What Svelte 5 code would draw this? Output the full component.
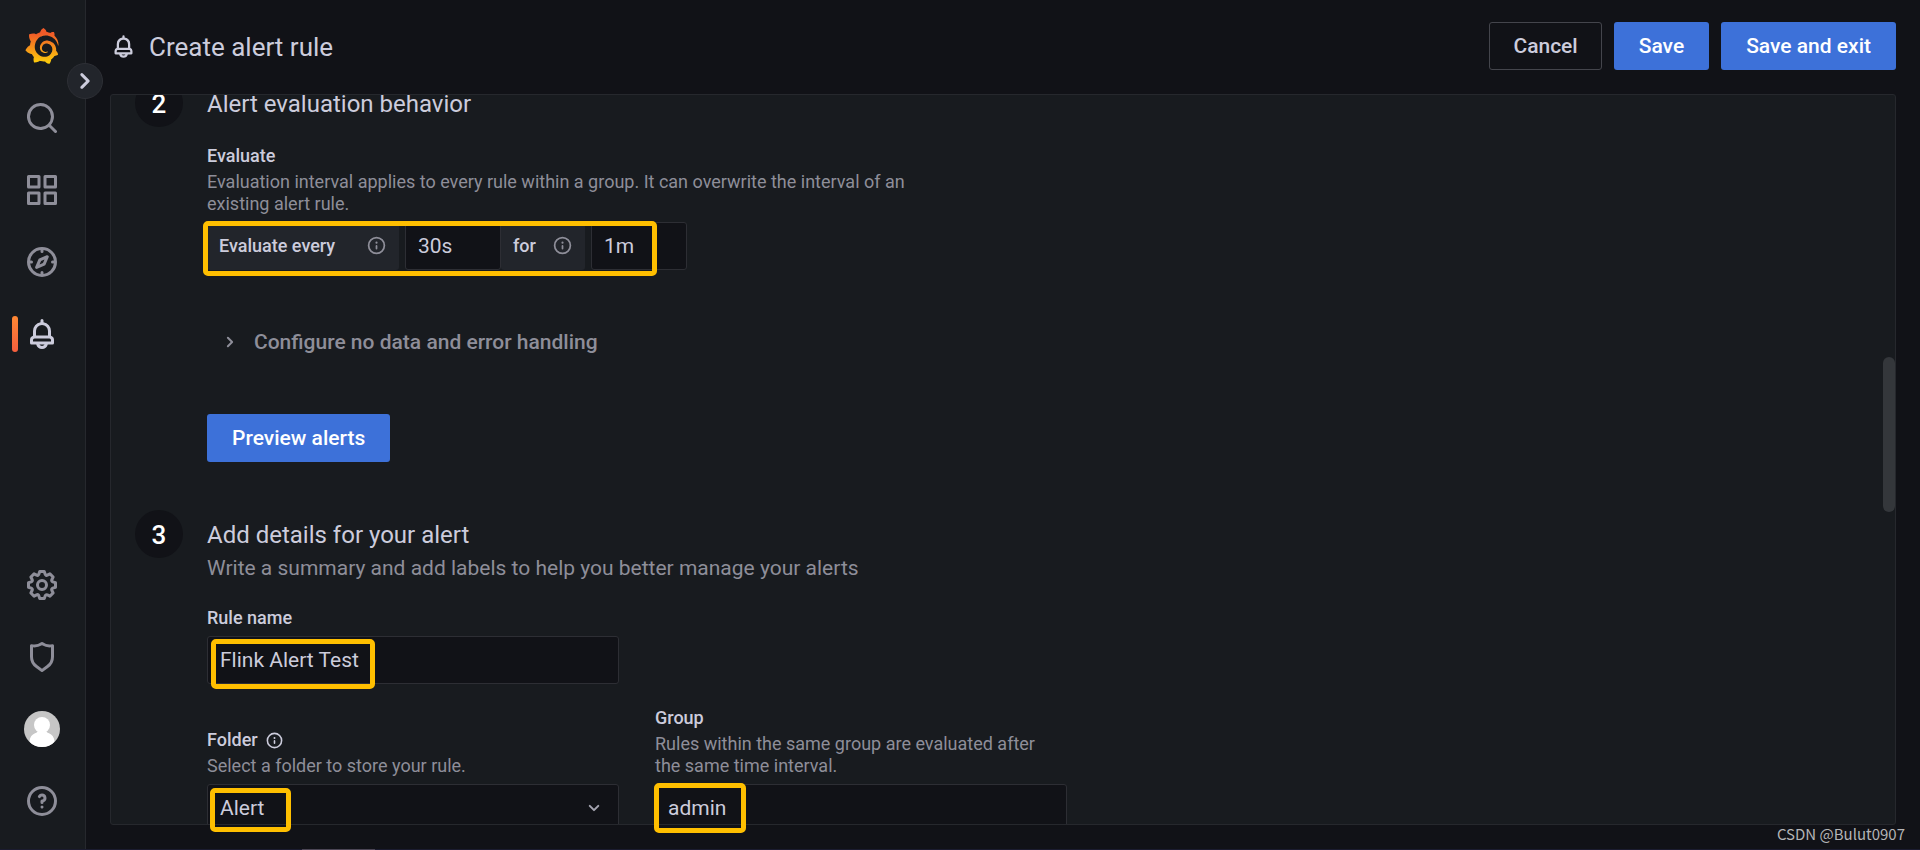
<script lang="ts">
	const icons = {
		search:
			'M21.71,20.29,18,16.61A9,9,0,1,0,16.61,18l3.68,3.68a1,1,0,0,0,1.42,0A1,1,0,0,0,21.71,20.29ZM11,18a7,7,0,1,1,7-7A7,7,0,0,1,11,18Z',
		apps: 'M10,13H3a1,1,0,0,0-1,1v7a1,1,0,0,0,1,1h7a1,1,0,0,0,1-1V14A1,1,0,0,0,10,13ZM9,20H4V15H9ZM21,2H14a1,1,0,0,0-1,1v7a1,1,0,0,0,1,1h7a1,1,0,0,0,1-1V3A1,1,0,0,0,21,2ZM20,9H15V4h5Zm1,4H14a1,1,0,0,0-1,1v7a1,1,0,0,0,1,1h7a1,1,0,0,0,1-1V14A1,1,0,0,0,21,13Zm-1,7H15V15h5ZM10,2H3A1,1,0,0,0,2,3v7a1,1,0,0,0,1,1h7a1,1,0,0,0,1-1V3A1,1,0,0,0,10,2ZM9,9H4V4H9Z',
		compass:
			'M12,2A10,10,0,1,0,22,12,10,10,0,0,0,12,2Zm1,17.93V19a1,1,0,0,0-2,0v.93A8,8,0,0,1,4.07,13H5a1,1,0,0,0,0-2H4.07A8,8,0,0,1,11,4.07V5a1,1,0,0,0,2,0V4.07A8,8,0,0,1,19.93,11H19a1,1,0,0,0,0,2h.93A8,8,0,0,1,13,19.93ZM15.14,7.55l-5,2.12a1,1,0,0,0-.52.52l-2.12,5a1,1,0,0,0,.21,1.1,1,1,0,0,0,.7.3.93.93,0,0,0,.4-.09l5-2.12a1,1,0,0,0,.52-.52l2.12-5a1,1,0,0,0-1.31-1.31Zm-2.49,5.1-2.28,1,1-2.28,2.28-1Z',
		bell: 'M18,13.18V10a6,6,0,0,0-5-5.91V3a1,1,0,0,0-2,0V4.09A6,6,0,0,0,6,10v3.18A3,3,0,0,0,4,16v2a1,1,0,0,0,1,1H8.14a4,4,0,0,0,7.72,0H19a1,1,0,0,0,1-1V16A3,3,0,0,0,18,13.18ZM8,10a4,4,0,0,1,8,0v3H8Zm4,10a2,2,0,0,1-1.72-1h3.44A2,2,0,0,1,12,20Zm6-3H6V16a1,1,0,0,1,1-1H17a1,1,0,0,1,1,1Z',
		cog: 'M21.32,9.55l-1.89-.63.89-1.78A1,1,0,0,0,20.13,6L18,3.87a1,1,0,0,0-1.15-.19l-1.78.89-.63-1.89A1,1,0,0,0,13.5,2h-3a1,1,0,0,0-.95.68L8.92,4.57,7.14,3.68A1,1,0,0,0,6,3.87L3.87,6a1,1,0,0,0-.19,1.15l.89,1.78-1.89.63A1,1,0,0,0,2,10.5v3a1,1,0,0,0,.68.95l1.89.63-.89,1.78A1,1,0,0,0,3.87,18L6,20.13a1,1,0,0,0,1.15.19l1.78-.89.63,1.89a1,1,0,0,0,.95.68h3a1,1,0,0,0,.95-.68l.63-1.89,1.78.89A1,1,0,0,0,18,20.13L20.13,18a1,1,0,0,0,.19-1.15l-.89-1.78,1.89-.63A1,1,0,0,0,22,13.5v-3A1,1,0,0,0,21.32,9.55ZM20,12.78l-1.2.4A2,2,0,0,0,17.64,16l.57,1.14-1.1,1.1L16,17.64a2,2,0,0,0-2.79,1.16l-.4,1.2H11.22l-.4-1.2A2,2,0,0,0,8,17.64l-1.14.57-1.1-1.1L6.36,16A2,2,0,0,0,5.2,13.18L4,12.78V11.22l1.2-.4A2,2,0,0,0,6.36,8L5.79,6.89l1.1-1.1L8,6.36A2,2,0,0,0,10.82,5.2l.4-1.2h1.56l.4,1.2A2,2,0,0,0,16,6.36l1.14-.57,1.1,1.1L17.64,8a2,2,0,0,0,1.16,2.79l1.2.4ZM12,8a4,4,0,1,0,4,4A4,4,0,0,0,12,8Zm0,6a2,2,0,1,1,2-2A2,2,0,0,1,12,14Z',
		shield:
			'M19.63,3.65a1,1,0,0,0-.84-.2,8,8,0,0,1-6.22-1.27,1,1,0,0,0-1.14,0A8,8,0,0,1,5.21,3.45a1,1,0,0,0-.84.2A1,1,0,0,0,4,4.43v7.45a9,9,0,0,0,3.77,7.33l3.65,2.6a1,1,0,0,0,1.16,0l3.65-2.6A9,9,0,0,0,20,11.88V4.43A1,1,0,0,0,19.63,3.65ZM18,11.88a7,7,0,0,1-2.93,5.7L12,19.77,8.93,17.58A7,7,0,0,1,6,11.88V5.58a10,10,0,0,0,6-1.39,10,10,0,0,0,6,1.39Z',
		question:
			'M11.29,15.29a1.58,1.58,0,0,0-.12.15.76.76,0,0,0-.09.18.64.64,0,0,0-.06.18,1.36,1.36,0,0,0,0,.2.84.84,0,0,0,.08.38.9.9,0,0,0,.54.54.94.94,0,0,0,.76,0,.9.9,0,0,0,.54-.54A1,1,0,0,0,13,16a1,1,0,0,0-.29-.71A1,1,0,0,0,11.29,15.29ZM12,2A10,10,0,1,0,22,12,10,10,0,0,0,12,2Zm0,18a8,8,0,1,1,8-8A8,8,0,0,1,12,20ZM12,7A3,3,0,0,0,9.4,8.5a1,1,0,1,0,1.73,1A1,1,0,0,1,12,9a1,1,0,0,1,0,2,1,1,0,0,0-1,1v1a1,1,0,0,0,2,0v-.18A3,3,0,0,0,12,7Z',
		info: 'M12,2A10,10,0,1,0,22,12,10,10,0,0,0,12,2Zm0,18a8,8,0,1,1,8-8A8,8,0,0,1,12,20Zm0-8.5a1,1,0,0,0-1,1v3a1,1,0,0,0,2,0v-3A1,1,0,0,0,12,11.5Zm0-4a1.25,1.25,0,1,0,1.25,1.25A1.25,1.25,0,0,0,12,7.5Z',
		angleRight:
			'M14.83,11.29,10.59,7.05a1,1,0,0,0-1.42,0,1,1,0,0,0,0,1.41L12.71,12,9.17,15.54a1,1,0,0,0,0,1.41,1,1,0,0,0,.71.29,1,1,0,0,0,.71-.29l4.24-4.24A1,1,0,0,0,14.83,11.29Z',
		angleDown:
			'M17,9.17a1,1,0,0,0-1.41,0L12,12.71,8.46,9.17a1,1,0,0,0-1.41,0,1,1,0,0,0,0,1.42l4.24,4.24a1,1,0,0,0,1.42,0L17,10.59A1,1,0,0,0,17,9.17Z'
	};

	const mainNav = [
		{ label: 'Search', icon: icons.search, active: false },
		{ label: 'Dashboards', icon: icons.apps, active: false },
		{ label: 'Explore', icon: icons.compass, active: false },
		{ label: 'Alerting', icon: icons.bell, active: true }
	];

	let every = $state('30s');
	let duration = $state('1m');
	let ruleName = $state('Flink Alert Test');
	let folder = $state('Alert');
	let group = $state('admin');
</script>

{#snippet icon(path: string, cls: string)}
	<svg class="icon {cls}" viewBox="0 0 24 24" aria-hidden="true"><path d={path} /></svg>
{/snippet}

<div class="app">
	<div class="shell">
		<nav class="sidebar" aria-label="Main">
			<a class="logo" href="#home" aria-label="Home">
				<svg viewBox="8 0 335 365" aria-hidden="true">
					<defs>
						<linearGradient id="flame" x1="0" y1="1" x2="0" y2="0">
							<stop offset="0" stop-color="#fcd00a" />
							<stop offset="0.85" stop-color="#f05a28" />
						</linearGradient>
					</defs>
					<path
						fill="url(#flame)"
						d="M342,161.2c-0.6-6.1-1.6-13.1-3.6-20.9c-2-7.7-5-16.2-9.4-25c-4.4-8.8-10.1-17.9-17.5-26.8c-2.9-3.5-6.1-6.9-9.5-10.2c5.1-20.3-6.2-37.9-6.2-37.9c-19.5-1.2-31.9,6.1-36.5,9.4c-0.8-0.3-1.5-0.7-2.3-1c-3.3-1.3-6.7-2.6-10.3-3.7c-3.5-1.1-7.1-2.1-10.8-3c-3.7-0.9-7.4-1.6-11.2-2.2c-0.7-0.1-1.3-0.2-2-0.3c-8.5-27.2-32.9-38.6-32.9-38.6c-27.3,17.3-32.4,41.5-32.4,41.5s-0.1,0.5-0.3,1.4c-1.5,0.4-3,0.9-4.5,1.3c-2.1,0.6-4.2,1.4-6.2,2.2c-2.1,0.8-4.1,1.6-6.2,2.5c-4.1,1.8-8.2,3.8-12.2,6c-3.9,2.2-7.7,4.6-11.4,7.1c-0.5-0.2-1-0.4-1-0.4c-37.8-14.4-71.3,2.9-71.3,2.9c-3.1,40.2,15.1,65.5,18.7,70.1c-0.9,2.5-1.7,5-2.5,7.5c-2.8,9.1-4.9,18.4-6.2,28.1c-0.2,1.4-0.4,2.8-0.5,4.2C18.8,192.7,8.5,228,8.5,228c29.1,33.5,63.1,35.6,63.1,35.6c0,0,0.1-0.1,0.1-0.1c4.3,7.7,9.3,15,14.9,21.9c2.4,2.9,4.8,5.6,7.4,8.3c-10.6,30.4,1.5,55.6,1.5,55.6c32.4,1.2,53.7-14.2,58.2-17.7c3.2,1.1,6.5,2.1,9.8,2.9c10,2.6,20.2,4.1,30.4,4.5c2.5,0.1,5.1,0.2,7.6,0.1l1.2,0l0.8,0l1.6,0l1.6-0.1l0,0.1c15.3,21.8,42.1,24.9,42.1,24.9c19.1-20.1,20.2-40.1,20.2-44.4l0,0c0,0,0-0.1,0-0.3c0-0.4,0-0.6,0-0.6l0,0c0-0.3,0-0.6,0-0.9c4-2.8,7.8-5.8,11.4-9.1c7.6-6.9,14.3-14.8,19.9-23.3c0.5-0.8,1-1.6,1.5-2.4c21.6,1.2,36.9-13.4,36.9-13.4c-3.6-22.5-16.4-33.5-19.1-35.6l0,0c0,0-0.1-0.1-0.3-0.2c-0.2-0.1-0.2-0.2-0.2-0.2c0,0,0,0,0,0c-0.1-0.1-0.3-0.2-0.5-0.3c0.1-1.4,0.2-2.7,0.3-4.1c0.2-2.4,0.2-4.9,0.2-7.3l0-1.8l0-0.9l0-0.5c0-0.6,0-0.4,0-0.6l-0.1-1.5l-0.1-2c0-0.7-0.1-1.3-0.2-1.9c-0.1-0.6-0.1-1.3-0.2-1.9l-0.2-1.9l-0.3-1.9c-0.4-2.5-0.8-4.9-1.4-7.4c-2.3-9.7-6.1-18.9-11-27.2c-5-8.3-11.2-15.6-18.3-21.8c-7-6.2-14.9-11.2-23.1-14.9c-8.3-3.7-16.9-6.1-25.5-7.2c-4.3-0.6-8.6-0.8-12.9-0.7l-1.6,0l-0.4,0c-0.1,0-0.6,0-0.5,0l-0.7,0l-1.6,0.1c-0.6,0-1.2,0.1-1.7,0.1c-2.2,0.2-4.4,0.5-6.5,0.9c-8.6,1.6-16.7,4.7-23.8,9c-7.1,4.3-13.3,9.6-18.3,15.6c-5,6-8.9,12.7-11.6,19.6c-2.7,6.9-4.2,14.1-4.6,21c-0.1,1.7-0.1,3.5-0.1,5.2c0,0.4,0,0.9,0,1.3l0.1,1.4c0.1,0.8,0.1,1.7,0.2,2.5c0.3,3.5,1,6.9,1.9,10.1c1.9,6.5,4.9,12.4,8.6,17.4c3.7,5,8.2,9.1,12.9,12.4c4.7,3.2,9.8,5.5,14.8,7c5,1.5,10,2.1,14.7,2.1c0.6,0,1.2,0,1.7,0c0.3,0,0.6,0,0.9,0c0.3,0,0.6,0,0.9-0.1c0.5,0,1-0.1,1.5-0.1c0.1,0,0.3,0,0.4-0.1l0.5-0.1c0.3,0,0.6-0.1,0.9-0.1c0.6-0.1,1.1-0.2,1.7-0.3c0.6-0.1,1.1-0.2,1.6-0.4c1.1-0.2,2.1-0.6,3.1-0.9c2-0.7,4-1.5,5.7-2.4c1.8-0.9,3.4-2,5-3c0.4-0.3,0.9-0.6,1.3-1c1.6-1.3,1.9-3.7,0.6-5.3c-1.1-1.4-3.1-1.8-4.7-0.9c-0.4,0.2-0.8,0.4-1.2,0.6c-1.4,0.7-2.8,1.3-4.3,1.8c-1.5,0.5-3.1,0.9-4.7,1.2c-0.8,0.1-1.6,0.2-2.5,0.3c-0.4,0-0.8,0.1-1.3,0.1c-0.4,0-0.9,0-1.2,0c-0.4,0-0.8,0-1.2,0c-0.5,0-1,0-1.5-0.1c0,0-0.3,0-0.1,0l-0.2,0l-0.3,0c-0.2,0-0.5,0-0.7-0.1c-0.5-0.1-0.9-0.1-1.4-0.2c-3.7-0.5-7.4-1.6-10.9-3.2c-3.6-1.6-7-3.8-10.1-6.6c-3.1-2.8-5.8-6.1-7.9-9.9c-2.1-3.8-3.6-8-4.3-12.4c-0.3-2.2-0.5-4.5-0.4-6.7c0-0.6,0.1-1.2,0.1-1.8c0,0.2,0-0.1,0-0.1l0-0.2l0-0.5c0-0.3,0.1-0.6,0.1-0.9c0.1-1.2,0.3-2.4,0.5-3.6c1.7-9.6,6.5-19,13.9-26.1c1.9-1.8,3.9-3.4,6-4.9c2.1-1.5,4.4-2.8,6.8-3.9c2.4-1.1,4.8-2,7.4-2.7c2.5-0.7,5.1-1.1,7.8-1.4c1.3-0.1,2.6-0.2,4-0.2c0.4,0,0.6,0,0.9,0l1.1,0l0.7,0c0.3,0,0,0,0.1,0l0.3,0l1.1,0.1c2.9,0.2,5.7,0.6,8.5,1.3c5.6,1.2,11.1,3.3,16.2,6.1c10.2,5.7,18.9,14.5,24.2,25.1c2.7,5.3,4.6,11,5.5,16.9c0.2,1.5,0.4,3,0.5,4.5l0.1,1.1l0.1,1.1c0,0.4,0,0.8,0,1.1c0,0.4,0,0.8,0,1.1l0,1l0,1.1c0,0.7-0.1,1.9-0.1,2.6c-0.1,1.6-0.3,3.3-0.5,4.9c-0.2,1.6-0.5,3.2-0.8,4.8c-0.3,1.6-0.7,3.2-1.1,4.7c-0.8,3.1-1.8,6.2-3,9.3c-2.4,6-5.6,11.8-9.4,17.1c-7.7,10.6-18.2,19.2-30.2,24.7c-6,2.7-12.3,4.7-18.8,5.7c-3.2,0.6-6.5,0.9-9.8,1l-0.6,0l-0.5,0l-1.1,0l-1.6,0l-0.8,0c0.4,0-0.1,0-0.1,0l-0.3,0c-1.8,0-3.5-0.1-5.3-0.3c-7-0.5-13.9-1.8-20.7-3.7c-6.7-1.9-13.2-4.6-19.4-7.8c-12.3-6.6-23.4-15.6-32-26.5c-4.3-5.4-8.1-11.3-11.2-17.4c-3.1-6.1-5.6-12.6-7.4-19.1c-1.8-6.6-2.9-13.3-3.4-20.1l-0.1-1.3l0-0.3l0-0.3l0-0.6l0-1.1l0-0.3l0-0.4l0-0.8l0-1.6l0-0.3c0,0,0,0.1,0-0.1l0-0.6c0-0.8,0-1.7,0-2.5c0.1-3.3,0.4-6.8,0.8-10.2c0.4-3.4,1-6.9,1.7-10.3c0.7-3.4,1.5-6.8,2.5-10.2c1.9-6.7,4.3-13.2,7.1-19.3c5.7-12.2,13.1-23.1,22-31.8c2.2-2.2,4.5-4.2,6.9-6.2c2.4-1.9,4.9-3.7,7.5-5.4c2.5-1.7,5.2-3.2,7.9-4.6c1.3-0.7,2.7-1.4,4.1-2c0.7-0.3,1.4-0.6,2.1-0.9c0.7-0.3,1.4-0.6,2.1-0.9c2.8-1.2,5.7-2.2,8.7-3.1c0.7-0.2,1.5-0.4,2.2-0.7c0.7-0.2,1.5-0.4,2.2-0.6c1.5-0.4,3-0.8,4.5-1.1c0.7-0.2,1.5-0.3,2.3-0.5c0.8-0.2,1.5-0.3,2.3-0.5c0.8-0.1,1.5-0.3,2.3-0.4l1.1-0.2l1.2-0.2c0.8-0.1,1.5-0.2,2.3-0.3c0.9-0.1,1.7-0.2,2.6-0.3c0.7-0.1,1.9-0.2,2.6-0.3c0.5-0.1,1.1-0.1,1.6-0.2l1.1-0.1l0.5-0.1l0.6,0c0.9-0.1,1.7-0.1,2.6-0.2l1.3-0.1c0,0,0.5,0,0.1,0l0.3,0l0.6,0c0.7,0,1.5-0.1,2.2-0.1c2.9-0.1,5.9-0.1,8.8,0c5.8,0.2,11.5,0.9,17,1.9c11.1,2.1,21.5,5.6,31,10.3c9.5,4.6,17.9,10.3,25.3,16.5c0.5,0.4,0.9,0.8,1.4,1.2c0.4,0.4,0.9,0.8,1.3,1.2c0.9,0.8,1.7,1.6,2.6,2.4c0.9,0.8,1.7,1.6,2.5,2.4c0.8,0.8,1.6,1.6,2.4,2.5c3.1,3.3,6,6.6,8.6,10c5.2,6.7,9.4,13.5,12.7,19.9c0.2,0.4,0.4,0.8,0.6,1.2c0.2,0.4,0.4,0.8,0.6,1.2c0.4,0.8,0.8,1.6,1.1,2.4c0.4,0.8,0.7,1.5,1.1,2.3c0.3,0.8,0.7,1.5,1,2.3c1.2,3,2.4,5.9,3.3,8.6c1.5,4.4,2.6,8.3,3.5,11.7c0.3,1.4,1.6,2.3,3,2.1c1.5-0.1,2.6-1.3,2.6-2.8C342.6,170.4,342.5,166.1,342,161.2z"
					/>
				</svg>
			</a>
			{#each mainNav as item}
				<a class="nav-item" class:active={item.active} href="#nav" aria-label={item.label}>
					{@render icon(item.icon, 'icon-nav')}
				</a>
			{/each}
			<div class="nav-spacer"></div>
			<a class="nav-item" href="#settings" aria-label="Configuration">
				{@render icon(icons.cog, 'icon-nav')}
			</a>
			<a class="nav-item" href="#admin" aria-label="Server admin">
				{@render icon(icons.shield, 'icon-nav')}
			</a>
			<a class="nav-item" href="#profile" aria-label="Profile">
				<svg class="avatar" viewBox="0 0 36 36" aria-hidden="true">
					<rect width="36" height="36" fill="#c6c6c6" />
					<ellipse cx="18" cy="14" rx="8" ry="8" fill="#fff" />
					<path
						fill="#fff"
						d="M14 19h8c0 2 1 2.500 3 3.200 3 1.200 5 3.800 5.500 7.800L28 36H8l-2.500-6c.5-4 2.500-6.600 5.500-7.800 2-.7 3-1.200 3-3.200z"
					/>
				</svg>
			</a>
			<a class="nav-item" href="#help" aria-label="Help">
				{@render icon(icons.question, 'icon-nav')}
			</a>
			<button class="nav-toggle" type="button" aria-label="Expand menu">
				{@render icon(icons.angleRight, 'icon-toggle')}
			</button>
		</nav>

		<main class="page">
			<header class="toolbar">
				{@render icon(icons.bell, 'icon-title')}
				<h1>Create alert rule</h1>
				<div class="toolbar-actions">
					<button class="btn btn-outline" type="button">Cancel</button>
					<button class="btn" type="button">Save</button>
					<button class="btn" type="button">Save and exit</button>
				</div>
			</header>

			<div class="panel-wrap">
				<div class="panel">
					<form class="rule-form">
						<section class="step">
							<span class="step-number">2</span>
							<div class="step-body">
								<h2>Alert evaluation behavior</h2>
								<div class="field evaluate">
									<span class="label">Evaluate</span>
									<p class="description">
										Evaluation interval applies to every rule within a group. It can overwrite the
										interval of an existing alert rule.
									</p>
									<div class="inline-fields">
										<label class="inline-label label-every" for="every">
											Evaluate every {@render icon(icons.info, 'icon-info')}
										</label>
										<input id="every" class="control short" type="text" bind:value={every} />
										<label class="inline-label label-for" for="duration">
											for {@render icon(icons.info, 'icon-info')}
										</label>
										<input id="duration" class="control short" type="text" bind:value={duration} />
									</div>
								</div>
								<button class="collapse" type="button">
									{@render icon(icons.angleRight, 'icon-angle')}
									Configure no data and error handling
								</button>
								<button class="btn" type="button">Preview alerts</button>
							</div>
						</section>

						<section class="step">
							<span class="step-number">3</span>
							<div class="step-body">
								<h2>Add details for your alert</h2>
								<p class="summary">Write a summary and add labels to help you better manage your alerts</p>
								<div class="field-row rule-row">
									<div class="field">
										<label class="label" for="rule-name">Rule name</label>
										<input id="rule-name" class="control" type="text" bind:value={ruleName} />
									</div>
								</div>
								<div class="field-row">
									<div class="field">
										<label class="label" for="folder">
											Folder {@render icon(icons.info, 'icon-label')}
										</label>
										<p class="description">Select a folder to store your rule.</p>
										<div class="select-wrap">
											<select id="folder" class="control" bind:value={folder}>
												<option>Alert</option>
											</select>
											{@render icon(icons.angleDown, 'icon-caret')}
										</div>
									</div>
									<div class="field">
										<label class="label" for="group">Group</label>
										<p class="description">
											Rules within the same group are evaluated after the same time interval.
										</p>
										<input id="group" class="control" type="text" bind:value={group} />
									</div>
								</div>
							</div>
						</section>
					</form>
					<div class="scroll-thumb"></div>
				</div>

				<div class="mark mark-evaluate"></div>
				<div class="mark mark-name"></div>
				<div class="mark mark-folder"></div>
				<div class="mark mark-group"></div>
			</div>
		</main>
	</div>
	<div class="bottom-edge"><span></span></div>
	<span class="watermark">CSDN @Bulut0907</span>
</div>

<style>
	:global(body) {
		background: #111217;
	}

	.app {
		position: relative;
		display: flex;
		flex-direction: column;
		height: 100vh;
		overflow: hidden;
		background: #111217;
		color: #ccccdc;
		font-family: Roboto, 'Liberation Sans', sans-serif;
		font-size: 21px;
	}

	.app *,
	.app *::before {
		box-sizing: border-box;
	}

	.shell {
		display: flex;
		flex: 1;
		min-height: 0;
	}

	h1,
	h2,
	p {
		margin: 0;
		font-weight: 400;
	}

	button,
	input,
	select {
		font: inherit;
		color: inherit;
	}

	.icon {
		display: block;
		flex: none;
		fill: currentColor;
	}

	/* Sidebar */
	.sidebar {
		position: relative;
		display: flex;
		flex-direction: column;
		flex: none;
		width: 86px;
		padding: 10px 0 12px;
		background: #181b1f;
		border-right: 1px solid #26282d;
	}

	.logo,
	.nav-item {
		position: relative;
		display: flex;
		align-items: center;
		justify-content: center;
		height: 72px;
		padding-right: 1px;
		color: #8e8e99;
	}

	.logo svg {
		width: 34px;
		height: 36px;
	}

	.nav-item.active {
		color: #ccccdc;
	}

	.nav-item.active::before {
		content: '';
		position: absolute;
		left: 12px;
		width: 6px;
		height: 36px;
		border-radius: 3px;
		background: linear-gradient(#ff8833, #f55f3e);
	}

	.nav-spacer {
		flex: 1;
	}

	.icon-nav,
	.avatar {
		width: 36px;
		height: 36px;
	}

	.avatar {
		border-radius: 50%;
	}

	.nav-toggle {
		position: absolute;
		top: 63px;
		right: -18px;
		z-index: 2;
		display: flex;
		align-items: center;
		justify-content: center;
		width: 36px;
		height: 36px;
		padding: 0;
		border: 1px solid #2d2f35;
		border-radius: 50%;
		background: #22252b;
	}

	.icon-toggle {
		width: 36px;
		height: 36px;
	}

	/* Page */
	.page {
		display: flex;
		flex-direction: column;
		flex: 1;
		min-width: 0;
		padding: 0 24px 24px;
	}

	.toolbar {
		display: flex;
		align-items: center;
		height: 94px;
		padding-bottom: 2px;
	}

	.icon-title {
		width: 27px;
		height: 27px;
	}

	h1 {
		margin-left: 12px;
		padding-top: 2px;
		font-size: 26px;
		line-height: 36px;
	}

	.toolbar-actions {
		display: flex;
		gap: 12px;
		margin-left: auto;
	}

	.btn {
		height: 48px;
		padding: 0 25px;
		border: 0;
		border-radius: 3px;
		background: #3d71d9;
		color: #fff;
		font-weight: 500;
		white-space: nowrap;
	}

	.btn-outline {
		padding: 0 23px;
		border: 1px solid #44454c;
		background: transparent;
		color: #ccccdc;
	}

	.panel-wrap {
		position: relative;
		display: flex;
		flex: 1;
		min-height: 0;
	}

	.panel {
		position: relative;
		flex: 1;
		overflow: hidden;
		border: 1px solid #26282d;
		border-radius: 3px;
		background: #181b1f;
	}

	/* The form sits slightly scrolled under the panel's top edge */
	.rule-form {
		display: flex;
		flex-direction: column;
		gap: 48px;
		margin-top: -16px;
		padding: 0 24px;
	}

	.scroll-thumb {
		position: absolute;
		top: 262px;
		right: 0;
		width: 12px;
		height: 155px;
		border-radius: 6px;
		background: #34373b;
	}

	.step {
		display: flex;
		gap: 24px;
	}

	.step-number {
		flex: none;
		width: 48px;
		height: 48px;
		border-radius: 50%;
		background: #111217;
		color: #fff;
		font-size: 26px;
		font-weight: 500;
		line-height: 50px;
		text-align: center;
	}

	.step-body {
		display: flex;
		flex-direction: column;
		align-items: flex-start;
		flex: 1;
		min-width: 0;
	}

	h2 {
		font-size: 24px;
		line-height: 50px;
	}

	.summary {
		margin-top: -4px;
		color: #8e8e99;
		line-height: 24px;
	}

	.field {
		display: flex;
		flex-direction: column;
		width: 412px;
	}

	.field.evaluate {
		width: auto;
		max-width: 720px;
		margin-top: 15px;
	}

	.label {
		display: flex;
		align-items: center;
		gap: 7px;
		margin-bottom: 3px;
		font-size: 18px;
		font-weight: 500;
		line-height: 24px;
	}

	.description {
		margin-bottom: 7px;
		padding-right: 12px;
		color: #8e8e99;
		font-size: 18px;
		line-height: 22px;
	}

	.control {
		width: 100%;
		height: 48px;
		padding: 0 12px;
		border: 1px solid #2d2e34;
		border-radius: 3px;
		outline: none;
		background: #111217;
	}

	.control.short {
		width: 96px;
	}

	.inline-fields {
		display: flex;
	}

	.inline-label {
		display: flex;
		align-items: center;
		justify-content: space-between;
		height: 48px;
		margin-right: 6px;
		padding: 0 12px 2px;
		border-radius: 3px;
		background: #22252b;
		font-size: 18px;
		font-weight: 500;
	}

	.label-every {
		width: 192px;
	}

	.label-for {
		width: 84px;
	}

	.icon-info {
		width: 21px;
		height: 21px;
		color: #8e8e99;
	}

	.icon-label {
		width: 19px;
		height: 19px;
	}

	.collapse {
		display: flex;
		align-items: center;
		gap: 12px;
		margin: 56px 0;
		padding: 0 0 0 11px;
		border: 0;
		background: none;
		color: #8e8e99;
		font-weight: 500;
		line-height: 32px;
	}

	.icon-angle,
	.icon-caret {
		width: 24px;
		height: 24px;
	}

	.field-row {
		display: flex;
		align-items: flex-end;
		gap: 36px;
	}

	.rule-row {
		margin: 26px 0 22px;
	}

	.rule-row .label {
		margin-bottom: 6px;
	}

	.select-wrap {
		display: grid;
		align-items: center;
	}

	.select-wrap select {
		grid-area: 1 / 1;
		appearance: none;
	}

	.icon-caret {
		grid-area: 1 / 1;
		justify-self: end;
		margin-right: 13px;
		color: #a4a4b0;
		pointer-events: none;
	}

	/* Highlight boxes drawn over the form */
	.mark {
		position: absolute;
		border: 5px solid #ffbf00;
		border-radius: 5px;
		pointer-events: none;
	}

	.mark-evaluate {
		top: 127px;
		left: 93px;
		width: 454px;
		height: 55px;
	}

	.mark-name {
		top: 545px;
		left: 101px;
		width: 164px;
		height: 50px;
	}

	.mark-folder {
		top: 694px;
		left: 100px;
		width: 81px;
		height: 44px;
	}

	.mark-group {
		top: 689px;
		left: 544px;
		width: 92px;
		height: 50px;
	}

	.bottom-edge {
		flex: none;
		height: 1px;
		padding-left: 302px;
		background: #1b1c30;
	}

	.bottom-edge span {
		display: block;
		width: 73px;
		height: 1px;
		background: #4c4656;
	}

	.watermark {
		position: absolute;
		right: 15px;
		bottom: 6px;
		color: #b4b4b6;
		font-family: 'Noto Sans CJK SC', sans-serif;
		font-size: 15px;
		line-height: 20px;
	}
</style>
